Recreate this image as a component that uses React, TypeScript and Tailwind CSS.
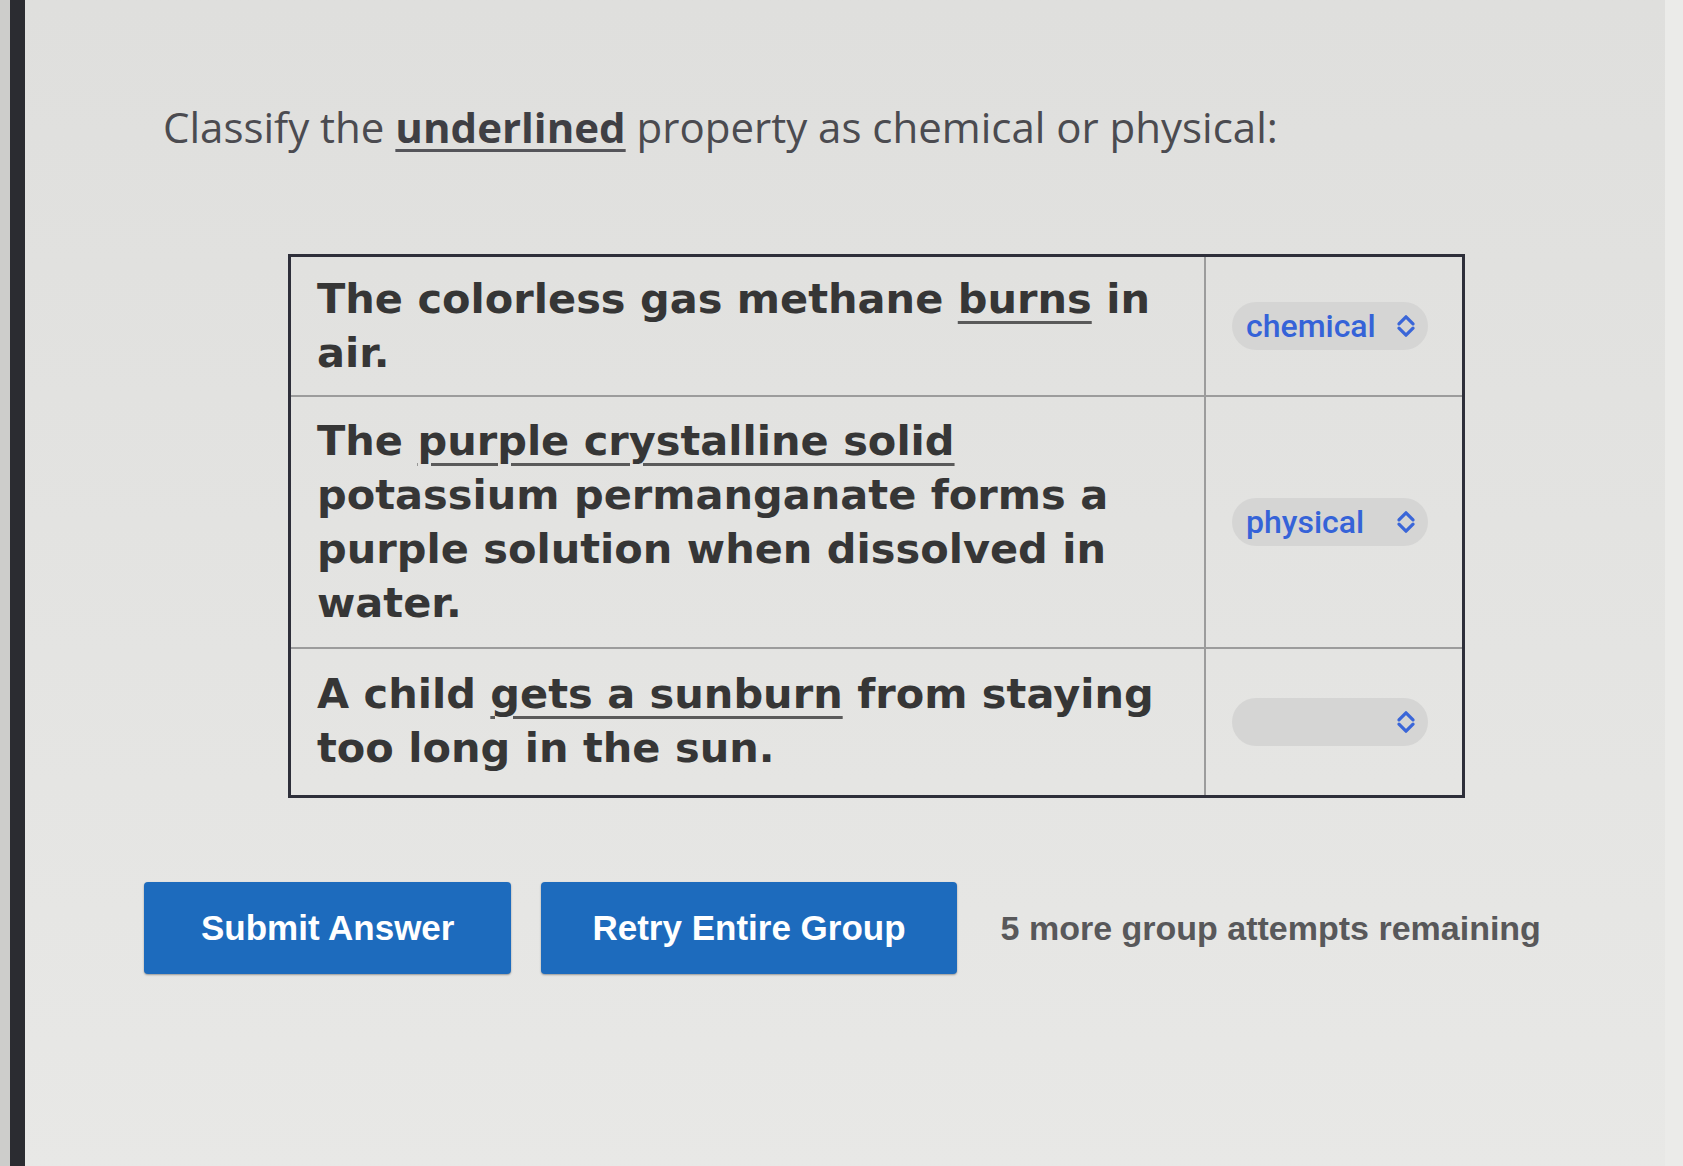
import React from 'react'

type Row = {
  id: string
  text: React.ReactNode
  value: string
  pad: string
}

const underline = 'underline decoration-[3px] underline-offset-[8px] decoration-[#5a5a5a]'

const rows: Row[] = [
  {
    id: 'methane',
    text: (
      <>
        The colorless gas methane <span className={underline}>burns</span> in air.
      </>
    ),
    value: 'chemical',
    pad: 'py-[15px]',
  },
  {
    id: 'permanganate',
    text: (
      <>
        The <span className={underline}>purple crystalline solid</span> potassium permanganate forms a purple
        solution when dissolved in water.
      </>
    ),
    value: 'physical',
    pad: 'py-[17px]',
  },
  {
    id: 'sunburn',
    text: (
      <>
        A child <span className={underline}>gets a sunburn</span> from staying too long in the sun.
      </>
    ),
    value: '',
    pad: 'pt-[18px] pb-[20px]',
  },
]

function UpDown() {
  return (
    <svg viewBox="0 0 20 24" className="h-[26px] w-[22px] shrink-0" fill="none" stroke="#3a66d8" strokeWidth={3} strokeLinecap="round" strokeLinejoin="round" aria-hidden="true">
      <path d="M3.5 10 10 3.5l6.5 6.5" />
      <path d="M3.5 14 10 20.5l6.5-6.5" />
    </svg>
  )
}

function Choice({ value }: { value: string }) {
  return (
    <div className="flex h-[48px] w-[196px] items-center justify-between rounded-full bg-[#d5d5d4] pl-[14px] pr-[11px]">
      <span className="font-['Roboto','Liberation_Sans',sans-serif] text-[32px] font-medium leading-none text-[#3563d8]">
        {value}
      </span>
      <UpDown />
    </div>
  )
}

export default function App() {
  return (
    <div className="flex h-[1166px] w-full overflow-hidden bg-gradient-to-b from-[#dfdfdd] to-[#e8e8e6]">
      <div className="w-[10px] shrink-0 bg-[#cdcdcb]" />
      <div className="w-[15px] shrink-0 bg-[#2b2c31]" />

      <main className="flex-1 pl-[119px] pt-[99px]">
        <h1 className="ml-[19px] font-['Open_Sans','Noto_Sans',sans-serif] text-[42px] font-normal leading-[56px] text-[#4b4b50]">
          Classify the{' '}
          <span className="font-bold text-[#3f3f44] underline decoration-[3px] underline-offset-[6px] decoration-[#55555a]">
            underlined
          </span>{' '}
          property as chemical or physical:
        </h1>

        <div className="ml-[144px] mt-[99px] w-fit border-[3px] border-[#2e2f3a]">
          {rows.map((row, i) => (
            <div key={row.id} className={i === 0 ? 'flex' : 'flex border-t-2 border-[#9c9c9c]'}>
              <div
                className={`w-[915px] border-r-2 border-[#9c9c9c] pl-[26px] pr-[12px] font-['DejaVu_Sans',sans-serif] text-[41.5px] font-bold leading-[54px] text-[#363636] ${row.pad}`}
              >
                {row.text}
              </div>
              <div className="flex w-[256px] items-center justify-center pr-[8px]">
                <Choice value={row.value} />
              </div>
            </div>
          ))}
        </div>

        <div className="mt-[84px] flex items-center font-['Liberation_Sans',Arial,sans-serif] font-bold">
          <button className="h-[92px] rounded-[4px] bg-[#1d6bbd] px-[57px] text-[35px] text-white shadow-[0_1px_2px_rgba(0,0,0,0.35)]">
            Submit Answer
          </button>
          <button className="ml-[30px] h-[92px] rounded-[4px] bg-[#1d6bbd] px-[51px] text-[35px] text-white shadow-[0_1px_2px_rgba(0,0,0,0.35)]">
            Retry Entire Group
          </button>
          <span className="ml-[44px] text-[34px] text-[#58585a]">5 more group attempts remaining</span>
        </div>
      </main>

      <div className="w-[18px] shrink-0 bg-[#ebebe9]" />
    </div>
  )
}
